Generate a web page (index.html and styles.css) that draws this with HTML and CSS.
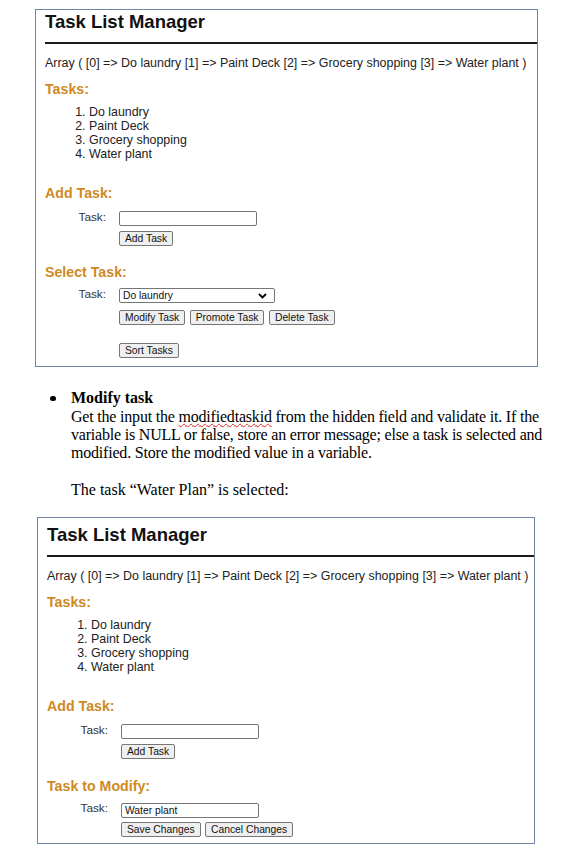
FILE: index.html
```html
<!DOCTYPE html>
<html>
<head>
<meta charset="utf-8">
<link rel="stylesheet" href="styles.css">
</head>
<body>
<div class="page">
  <section class="panel panel-a">
    <div class="head"><h1 class="title">Task List Manager</h1></div>
    <p class="arr">Array ( [0] =&gt; Do laundry [1] =&gt; Paint Deck [2] =&gt; Grocery shopping [3] =&gt; Water plant )</p>
    <h3 class="h">Tasks:</h3>
    <ol class="tasks">
      <li>Do laundry</li>
      <li>Paint Deck</li>
      <li>Grocery shopping</li>
      <li>Water plant</li>
    </ol>
    <h3 class="h h-add">Add Task:</h3>
    <div class="form">
      <span class="lbl">Task:</span>
      <span class="input"></span>
      <span></span>
      <div class="btns"><span class="btn">Add Task</span></div>
    </div>
    <h3 class="h h-sel">Select Task:</h3>
    <div class="form form-sel">
      <span class="lbl">Task:</span>
      <div class="select"><span>Do laundry</span><svg class="chev" width="9" height="6" viewBox="0 0 9 6"><path d="M1 1 L4.5 4.5 L8 1" fill="none" stroke="#000" stroke-width="1.8"/></svg></div>
      <span></span>
      <div class="btns"><span class="btn">Modify Task</span><span class="btn">Promote Task</span><span class="btn">Delete Task</span></div>
      <span></span>
      <div class="btns btns-sort"><span class="btn">Sort Tasks</span></div>
    </div>
  </section>

  <div class="doc">
    <span class="bullet"><span class="dot"></span></span>
    <div class="doc-body">
      <div class="doc-title">Modify task</div>
      <div class="doc-text">Get the input the <span class="squig">modifiedtaskid</span> from the hidden field and validate it. If the<br>variable is NULL or false, store an error message; else a task is selected and<br>modified. Store the modified value in a variable.</div>
      <p class="doc-p">The task “Water Plan” is selected:</p>
    </div>
  </div>

  <section class="panel panel-b">
    <div class="head"><h1 class="title">Task List Manager</h1></div>
    <p class="arr">Array ( [0] =&gt; Do laundry [1] =&gt; Paint Deck [2] =&gt; Grocery shopping [3] =&gt; Water plant )</p>
    <h3 class="h">Tasks:</h3>
    <ol class="tasks">
      <li>Do laundry</li>
      <li>Paint Deck</li>
      <li>Grocery shopping</li>
      <li>Water plant</li>
    </ol>
    <h3 class="h h-add">Add Task:</h3>
    <div class="form">
      <span class="lbl">Task:</span>
      <span class="input"></span>
      <span></span>
      <div class="btns"><span class="btn">Add Task</span></div>
    </div>
    <h3 class="h h-mod">Task to Modify:</h3>
    <div class="form form-mod">
      <span class="lbl">Task:</span>
      <span class="input">Water plant</span>
      <span></span>
      <div class="btns"><span class="btn">Save Changes</span><span class="btn">Cancel Changes</span></div>
    </div>
  </section>
</div>
</body>
</html>
```

FILE: styles.css
```css
html, body {
  margin: 0;
  background: #fff;
}
body {
  font-family: "Liberation Sans", Arial, sans-serif;
  color: #222;
}
.page {
  padding-top: 9px;
}
.panel {
  box-sizing: border-box;
  border: 1px solid #7083a8;
  margin-left: 35px;
  width: 503px;
  padding: 0 0 8px 9px;
}
.panel-b {
  margin-left: 37px;
  width: 498px;
  margin-top: 17.8px;
  padding-bottom: 6px;
}
.head {
  border-bottom: 2px solid #1a1a1a;
  padding: 1px 0 9px 0;
}
.panel-b .head {
  padding-top: 6px;
}
.title {
  margin: 0;
  font-size: 18.5px;
  line-height: 22px;
  font-weight: bold;
  color: #111;
}
.arr {
  margin: 11.5px 0 0;
  font-size: 12.45px;
  line-height: 15px;
}
.h {
  margin: 10px 0 0;
  font-size: 14.2px;
  line-height: 17px;
  font-weight: bold;
  color: #cf8a1f;
}
.h-add {
  margin-top: 24px;
}
.h-sel {
  margin-top: 17.5px;
}
.h-mod {
  margin-top: 19px;
}
.tasks {
  margin: 7px 0 0;
  padding-left: 44px;
  font-size: 12.4px;
  line-height: 14px;
}
.form {
  display: grid;
  grid-template-columns: 74px auto;
  row-gap: 5px;
  margin-top: 9.5px;
  justify-items: start;
  align-items: center;
}
.form-sel {
  margin-top: 7.5px;
  row-gap: 7px;
}
.form-mod {
  margin-top: 7.2px;
  row-gap: 4.4px;
}
.btns-sort {
  margin-top: 11.4px;
}
.lbl {
  padding-left: 33.5px;
  font-size: 11.8px;
  line-height: 13px;
  margin-top: -3px;
  color: #333;
}
.input {
  box-sizing: border-box;
  width: 138px;
  height: 15px;
  border: 1px solid #767676;
  border-radius: 2px;
  background: #fff;
  font-size: 10.3px;
  line-height: 13px;
  padding-left: 3px;
  color: #111;
}
.select {
  box-sizing: border-box;
  width: 156px;
  height: 15px;
  border: 1px solid #767676;
  border-radius: 2px;
  background: #fff;
  font-size: 10.3px;
  line-height: 13px;
  padding: 0 7px 0 3px;
  display: flex;
  justify-content: space-between;
  align-items: center;
  color: #111;
}
.btns {
  display: flex;
  gap: 4.5px;
}
.btn {
  box-sizing: border-box;
  height: 15px;
  padding: 0 5px;
  border: 1px solid #767676;
  border-radius: 2px;
  background: #efefef;
  font-size: 10.3px;
  line-height: 13px;
  color: #111;
  white-space: nowrap;
}
.doc {
  display: flex;
  margin: 21.8px 0 0 50px;
  font-family: "Liberation Serif", "Times New Roman", serif;
  font-size: 16px;
  line-height: 18.4px;
  color: #000;
}
.bullet {
  width: 21px;
  flex: none;
  height: 18.4px;
  display: flex;
  align-items: center;
}
.dot {
  width: 5.5px;
  height: 5.5px;
  border-radius: 50%;
  background: #000;
}
.doc-body {
  width: 492px;
  flex: none;
}
.doc-title {
  font-weight: bold;
}
.doc-text {
  letter-spacing: -0.2px;
  white-space: nowrap;
}
.doc-p {
  margin: 18.4px 0 0;
}
.squig {
  text-decoration: underline wavy #e02020;
  text-decoration-thickness: 1px;
  text-underline-offset: 1px;
}
```
